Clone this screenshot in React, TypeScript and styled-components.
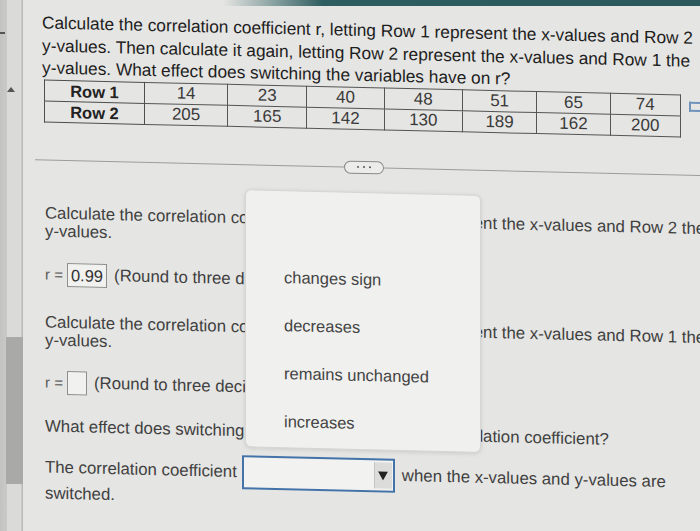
import React from 'react'
import styled, { createGlobalStyle } from 'styled-components'

const GlobalStyle = createGlobalStyle`
  html, body {
    margin: 0;
    padding: 0;
    background: #e4e4e2;
    overflow: hidden;
  }
  body {
    font-family: "Liberation Sans", Arial, sans-serif;
  }
`

const row1 = ['14', '23', '40', '48', '51', '65', '74']
const row2 = ['205', '165', '142', '130', '189', '162', '200']
const colWidths = [101, 84, 80, 78, 79, 75, 74, 71]

const options = ['', 'changes sign', 'decreases', 'remains unchanged', 'increases']

export default function App() {
  return (
    <Screen>
      <GlobalStyle />
      <Rail>
        <Tick />
        <UpArrow />
        <Thumb />
      </Rail>
      <Column>
        <TealBand />
        <Main>
          <Question>
            <QLine>Calculate the correlation coefficient r, letting Row 1 represent the x-values and Row 2</QLine>
            <QLine>y-values. Then calculate it again, letting Row 2 represent the x-values and Row 1 the</QLine>
            <QLine>y-values. What effect does switching the variables have on r?</QLine>
          </Question>
          <TableWrap>
            <DataTable>
              <colgroup>
                {colWidths.map((w, i) => (
                  <col key={i} style={{ width: w }} />
                ))}
              </colgroup>
              <tbody>
                <tr>
                  <HeadCell>Row 1</HeadCell>
                  {row1.map((v) => (
                    <Cell key={v}>{v}</Cell>
                  ))}
                </tr>
                <tr>
                  <HeadCell>Row 2</HeadCell>
                  {row2.map((v) => (
                    <Cell key={v}>{v}</Cell>
                  ))}
                </tr>
              </tbody>
            </DataTable>
            <EdgeIcon />
          </TableWrap>

          <Divider>
            <Rule />
            <MorePill>
              <Dot />
              <Dot />
              <Dot />
            </MorePill>
            <Rule />
          </Divider>

          <Part $top={38}>
            <PLine>Calculate the correlation coefficient r, letting Row 1 represent the x-values and Row 2 the</PLine>
            <PLine>y-values.</PLine>
          </Part>
          <AnswerRow $top={21}>
            <Req>r =</Req>
            <AnswerBox $filled>0.99</AnswerBox>
            <Hint>(Round to three decimal places as needed.)</Hint>
          </AnswerRow>

          <Part $top={26}>
            <PLine>Calculate the correlation coefficient r, letting Row 2 represent the x-values and Row 1 the</PLine>
            <PLine>y-values.</PLine>
          </Part>
          <AnswerRow $top={20}>
            <Req>r =</Req>
            <AnswerBox />
            <Hint>(Round to three decimal places as needed.)</Hint>
          </AnswerRow>

          <Part $top={22}>
            <PLine>What effect does switching the variables have on the correlation coefficient?</PLine>
          </Part>

          <SelectRow>
            <PLine>The correlation coefficient</PLine>
            <SelectBox>
              <ArrowButton>
                <svg width="10" height="9" viewBox="0 0 10 9">
                  <path d="M0 0 H10 L5 9 Z" fill="#222" />
                </svg>
              </ArrowButton>
            </SelectBox>
            <PLine>when the x-values and y-values are</PLine>
          </SelectRow>
          <Part $top={0}>
            <PLine>switched.</PLine>
          </Part>

          <Popup>
            {options.map((o, i) => (
              <Option key={i}>{o}</Option>
            ))}
          </Popup>
        </Main>
      </Column>
    </Screen>
  )
}

const Screen = styled.div`
  display: flex;
  width: 700px;
  height: 531px;
  overflow: hidden;
  background: #e5e5e3;
`

const Rail = styled.div`
  width: 23px;
  flex-shrink: 0;
  display: flex;
  flex-direction: column;
  background: linear-gradient(to right, #c3c3c1 0, #c9c9c7 7px, #dadad8 7px, #dadad8 21px, #b9b9b7 22px);
`

const Tick = styled.div`
  width: 5px;
  height: 2px;
  margin-top: 32px;
  background: #555;
`

const UpArrow = styled.div`
  width: 0;
  height: 0;
  margin: 53px 0 0 7px;
  border-left: 4px solid transparent;
  border-right: 4px solid transparent;
  border-bottom: 5px solid #555;
`

const Thumb = styled.div`
  width: 17px;
  height: 147px;
  margin: 245px 0 0 6px;
  background: #a9a9a7;
`

const Column = styled.div`
  flex: 1;
  display: flex;
  flex-direction: column;
  min-width: 0;
`

const TealBand = styled.div`
  height: 6px;
  flex-shrink: 0;
  background: linear-gradient(to right, rgba(45, 91, 94, 0) 200px, #2f5e60 300px, #2b595b);
`

const Main = styled.div`
  position: relative;
  flex: 1;
  transform: skewY(1.35deg);
  transform-origin: 0 0;
`

const Question = styled.div`
  padding: 5px 0 0 19px;
  color: #1d1d1d;
  font-size: 17.3px;
  line-height: 22.5px;
`

const QLine = styled.div`
  white-space: nowrap;
`

const TableWrap = styled.div`
  display: flex;
  align-items: flex-start;
  padding-left: 21px;
`

const DataTable = styled.table`
  border-collapse: collapse;
  table-layout: fixed;
  border: 1.5px solid #4e4e4e;
  font-size: 17px;
`

const HeadCell = styled.td`
  height: 20px;
  padding: 0;
  border: 1.5px solid #4e4e4e;
  text-align: center;
  font-weight: bold;
  font-size: 16.5px;
  color: #222;
  line-height: 20px;
`

const Cell = styled.td`
  height: 20px;
  padding: 0;
  border: 1.5px solid #555;
  text-align: center;
  color: #3a3a3a;
  line-height: 20px;
`

const EdgeIcon = styled.div`
  flex-shrink: 0;
  width: 9px;
  height: 6px;
  margin: 7px 0 0 8px;
  border: 2px solid #6f93bb;
  border-right: none;
`

const Divider = styled.div`
  display: grid;
  grid-template-columns: 309px 40px 1fr;
  align-items: center;
  height: 13px;
  margin: 31px 0 0 12px;
`

const Rule = styled.div`
  height: 1px;
  background: #9c9c9a;
`

const MorePill = styled.div`
  height: 11px;
  border: 1px solid #8a8a88;
  border-radius: 7px;
  background: #ececea;
  display: flex;
  align-items: center;
  justify-content: center;
  gap: 4px;
`

const Dot = styled.span`
  width: 2px;
  height: 2px;
  border-radius: 1px;
  background: #555;
`

const Part = styled.div<{ $top: number }>`
  margin-top: ${(p) => p.$top}px;
  padding-left: 22px;
`

const PLine = styled.div`
  white-space: nowrap;
  color: #3f3f3f;
  font-size: 16.8px;
  line-height: 18px;
`

const AnswerRow = styled.div<{ $top: number }>`
  display: flex;
  align-items: center;
  height: 26px;
  margin-top: ${(p) => p.$top}px;
  padding-left: 22px;
  white-space: nowrap;
`

const Req = styled.span`
  color: #5a5a5a;
  font-size: 15px;
  margin-right: 4px;
`

const AnswerBox = styled.span<{ $filled?: boolean }>`
  box-sizing: border-box;
  height: 24px;
  min-width: 20px;
  padding: 0 ${(p) => (p.$filled ? '3px' : '0')};
  border: 1px solid #8e8e8c;
  background: #f1f1ef;
  color: #333;
  font-size: 16.5px;
  line-height: 22px;
`

const Hint = styled.span`
  margin-left: 7px;
  color: #3f3f3f;
  font-size: 16.8px;
`

const SelectRow = styled.div`
  display: flex;
  align-items: center;
  height: 33px;
  margin-top: 16px;
  padding-left: 22px;
`

const SelectBox = styled.div`
  box-sizing: border-box;
  width: 153px;
  height: 34px;
  margin: 0 7px 0 5px;
  border: 2px solid #4373a8;
  background: #f2f2f0;
  display: flex;
  justify-content: flex-end;
  align-items: center;
  padding-right: 1px;
`

const ArrowButton = styled.div`
  width: 17px;
  height: 26px;
  background: #dcdcda;
  border-left: 1px solid #c4c4c2;
  display: flex;
  align-items: center;
  justify-content: center;
`

const Popup = styled.div`
  position: absolute;
  left: 222px;
  top: 178px;
  width: 236px;
  height: 258px;
  box-sizing: border-box;
  padding-top: 14px;
  background: #f0f0ee;
  border: 1px solid #d6d6d4;
  border-radius: 6px;
  box-shadow: 0 1px 4px rgba(0, 0, 0, 0.12);
`

const Option = styled.div`
  height: 48px;
  line-height: 48px;
  padding-left: 38px;
  color: #434343;
  font-size: 16.5px;
  white-space: nowrap;
`
